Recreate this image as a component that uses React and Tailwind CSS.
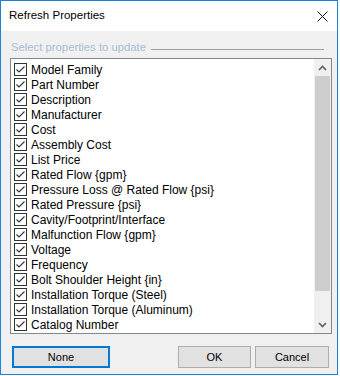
import React from 'react';

const items = [
  'Model Family',
  'Part Number',
  'Description',
  'Manufacturer',
  'Cost',
  'Assembly Cost',
  'List Price',
  'Rated Flow {gpm}',
  'Pressure Loss @ Rated Flow {psi}',
  'Rated Pressure {psi}',
  'Cavity/Footprint/Interface',
  'Malfunction Flow {gpm}',
  'Voltage',
  'Frequency',
  'Bolt Shoulder Height {in}',
  'Installation Torque (Steel)',
  'Installation Torque (Aluminum)',
  'Catalog Number',
];

function Check() {
  return (
    <span className="w-[13px] h-[13px] border border-[#333] bg-white flex items-center justify-center shrink-0">
      <svg width="11" height="11" viewBox="0 0 11 11">
        <path d="M1.5 5.5 L4 8 L9.5 2.5" fill="none" stroke="#333" strokeWidth="1.1" />
      </svg>
    </span>
  );
}

function Chevron({ up }) {
  return (
    <svg width="9" height="6" viewBox="0 0 9 6">
      <path d={up ? 'M1 5 L4.5 1.5 L8 5' : 'M1 1 L4.5 4.5 L8 1'} fill="none" stroke="#606060" strokeWidth="1.6" />
    </svg>
  );
}

export default function App() {
  return (
    <div className="w-[340px] h-[376px] bg-white text-[11px] text-black font-['Liberation_Sans',Arial,sans-serif]">
      <div className="w-[338px] h-[375px] border border-[#1883d7] flex flex-col">
        {/* title bar */}
        <div className="h-[30px] bg-white flex items-center justify-between pl-[8px] pr-[9px]">
          <span className="text-[11.5px] leading-none">Refresh Properties</span>
          <svg width="11" height="11" viewBox="0 0 11 11">
            <path d="M0.5 0.5 L10.5 10.5 M10.5 0.5 L0.5 10.5" stroke="#111" strokeWidth="1" />
          </svg>
        </div>

        <div className="flex-1 bg-[#f0f0f0] flex flex-col px-[9px]">
          {/* group label */}
          <div className="h-[27px] flex items-center gap-[5px] pl-[1px] pt-[6px]">
            <span className="text-[#a6bcd6] text-[11.3px] leading-[13px] whitespace-nowrap">Select properties to update</span>
            <div className="flex-1 h-px bg-[#a0a0a0] mt-[3px] mr-[4px]" />
          </div>

          {/* list box */}
          <div className="w-[322px] h-[276px] border border-[#828790] bg-white flex">
            <div className="flex-1 pt-[3px] pl-[3px] flex flex-col">
              {items.map((it) => (
                <div key={it} className="h-[15px] flex items-center gap-[4px]">
                  <Check />
                  <span className="text-[12px] leading-[14px] whitespace-nowrap">{it}</span>
                </div>
              ))}
            </div>
            <div className="w-[17px] bg-[#f0f0f0] flex flex-col">
              <div className="h-[17px] flex items-center justify-center">
                <Chevron up />
              </div>
              <div className="flex-1 flex flex-col">
                <div className="h-[215px] mx-px bg-[#cdcdcd]" />
              </div>
              <div className="h-[17px] flex items-center justify-center">
                <Chevron />
              </div>
            </div>
          </div>

          {/* buttons */}
          <div className="flex items-center mt-[12px] pl-[2px]">
            <button className="w-[98px] h-[22px] bg-[#e1e1e1] border-2 border-[#0078d7] leading-none">None</button>
            <div className="flex-1" />
            <button className="w-[73px] h-[22px] bg-[#e1e1e1] border border-[#adadad] leading-none">OK</button>
            <button className="w-[74px] h-[22px] bg-[#e1e1e1] border border-[#adadad] leading-none ml-[4px] mr-[-1px]">Cancel</button>
          </div>
        </div>
      </div>
    </div>
  );
}
